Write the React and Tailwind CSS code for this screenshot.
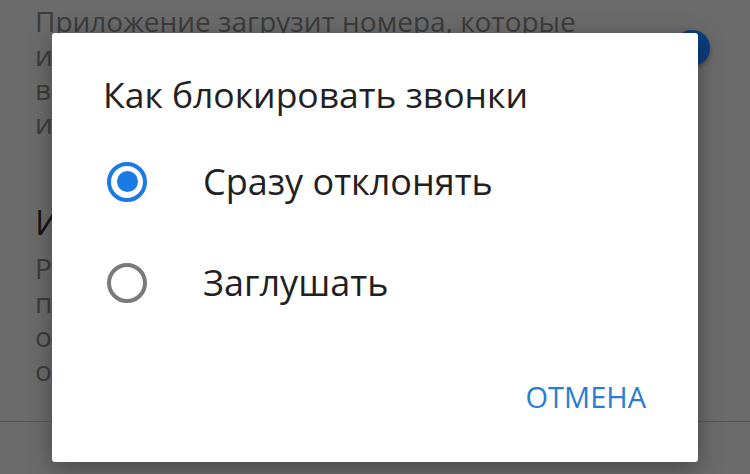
import React from "react";

function Radio({ checked }) {
  if (checked) {
    return (
      <div className="w-[40px] h-[40px] rounded-full border-[4px] border-[#1a7ae6] flex items-center justify-center">
        <div className="w-[21px] h-[21px] rounded-full bg-[#1a7ae6]" />
      </div>
    );
  }
  return <div className="w-[40px] h-[40px] rounded-full border-[4px] border-[#7a7a7a]" />;
}

export default function App() {
  const font = { fontFamily: '"Open Sans", "Noto Sans", sans-serif' };
  return (
    <div className="relative w-[750px] h-[474px] overflow-hidden bg-[#6b6b6b]" style={font}>
      {/* dimmed page behind the dialog */}
      <div className="flex flex-col pl-[35px] pt-[4px] text-[28px] leading-[34px] text-[#3c3c3c]">
        <div className="flex items-start">
          <div className="flex flex-col w-[620px]">
            <div className="whitespace-nowrap overflow-hidden">Приложение загрузит номера, которые</div>
            <div className="whitespace-nowrap overflow-hidden">используют мошенники и спамеры,</div>
            <div className="whitespace-nowrap overflow-hidden">внесёт их в список и будет</div>
            <div className="whitespace-nowrap overflow-hidden">их блокировать</div>
          </div>
          <div className="ml-[19px] mt-[26px] w-[36px] h-[36px] rounded-full bg-[#0b3e80] shadow-[0_2px_4px_rgba(0,0,0,0.3)]" />
        </div>
        <div className="mt-[62px] text-[34px] leading-[40px] text-[#161616] whitespace-nowrap">Исключения</div>
        <div className="mt-[9px] whitespace-nowrap overflow-hidden w-[600px]">Разрешить звонки от номеров</div>
        <div className="whitespace-nowrap overflow-hidden w-[600px]">по списку контактов</div>
        <div className="whitespace-nowrap overflow-hidden w-[600px]">от которых уже были</div>
        <div className="whitespace-nowrap overflow-hidden w-[600px]">обычные звонки</div>
      </div>
      <div className="absolute left-0 right-0 top-[421px] h-[1px] bg-[#575757]" />

      {/* dialog */}
      <div className="absolute left-[52px] top-[33px] w-[646px] h-[429px] bg-white rounded-[3px] shadow-[0_6px_24px_rgba(0,0,0,0.35)] flex flex-col">
        <div className="pl-[51px] pt-[38px] text-[35.5px] leading-[46px] text-[#212121] whitespace-nowrap">Как блокировать звонки</div>
        <div className="mt-[14px] flex flex-col">
          <div className="h-[101px] flex items-center pl-[55px]">
            <Radio checked />
            <span className="ml-[56px] text-[36px] leading-[48px] text-[#212121] whitespace-nowrap">Сразу отклонять</span>
          </div>
          <div className="h-[101px] flex items-center pl-[55px]">
            <Radio />
            <span className="ml-[56px] text-[36px] leading-[48px] text-[#212121] whitespace-nowrap">Заглушать</span>
          </div>
        </div>
        <div className="mt-[46px] flex justify-end pr-[52px]">
          <span className="text-[29px] leading-[36px] text-[#2a7dd3]">ОТМЕНА</span>
        </div>
      </div>
    </div>
  );
}
